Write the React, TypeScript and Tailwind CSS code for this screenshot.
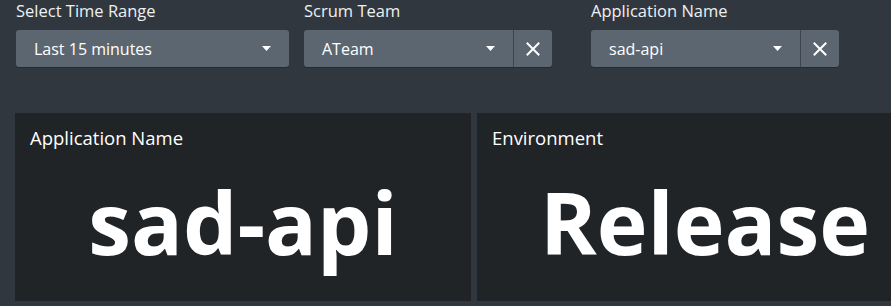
import React from "react";

const font = { fontFamily: '"Open Sans", "Liberation Sans", sans-serif' };

function Caret() {
  return (
    <svg width="9" height="5" viewBox="0 0 9 5" className="shrink-0">
      <path d="M0 0 L9 0 L4.5 5 Z" fill="#ffffff" />
    </svg>
  );
}

function XIcon() {
  return (
    <svg width="14" height="14" viewBox="0 0 14 14">
      <path d="M1.5 1.5 L12.5 12.5 M12.5 1.5 L1.5 12.5" stroke="#ffffff" strokeWidth="2" strokeLinecap="square" />
    </svg>
  );
}

function Filter({ label, value, width, outer, clear }: { label: string; value: string; width: string; outer: string; clear?: boolean }) {
  return (
    <div className={`${outer} shrink-0`}>
      <div className="h-[23px] text-[16.5px] leading-[22px] text-[#eef0f2]">{label}</div>
      <div className="mt-[7px] flex h-[37px] w-fit rounded-[3px] bg-[#5c6670] shadow-[0_1px_0_#262b30]">
        <div className={`flex items-center justify-between pl-[18px] pr-[18px] ${width}`}>
          <span className="text-[16px] text-white">{value}</span>
          <Caret />
        </div>
        {clear && (
          <div className="flex w-[39px] items-center justify-center border-l border-[#3d444c]">
            <XIcon />
          </div>
        )}
      </div>
    </div>
  );
}

function Panel({ title, value }: { title: string; value: string }) {
  return (
    <div className="flex h-[188px] w-[456px] shrink-0 flex-col bg-[#212427]">
      <div className="pl-[15px] pt-[13px] text-[18.5px] leading-[23px] text-white">{title}</div>
      <div className="flex flex-1 items-start justify-center pt-[23px]">
        <span className="text-[86px] font-bold leading-[100px] text-white">{value}</span>
      </div>
    </div>
  );
}

export default function App() {
  return (
    <div className="h-[306px] w-[891px] overflow-hidden bg-[#31373e]" style={font}>
      <div className="flex pl-[16px]">
        <Filter outer="w-[288px]" label="Select Time Range" value="Last 15 minutes" width="w-[273px]" />
        <Filter outer="w-[287px]" label="Scrum Team" value="ATeam" width="w-[209px]" clear />
        <Filter outer="w-[287px]" label="Application Name" value="sad-api" width="w-[209px]" clear />
      </div>
      <div className="mt-[46px] flex gap-[6px] pl-[15px]">
        <Panel title="Application Name" value="sad-api" />
        <Panel title="Environment" value="Release" />
      </div>
    </div>
  );
}
